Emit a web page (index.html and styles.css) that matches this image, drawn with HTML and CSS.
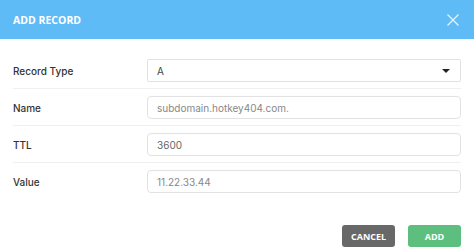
FILE: index.html
```html
<!DOCTYPE html>
<html lang="en">
<head>
    <meta charset="UTF-8">
    <title>Add Record</title>
    <link rel="stylesheet" href="styles.css">
</head>
<body>
    <div class="modal">
        <div class="modal-header">
            <h1>ADD RECORD</h1>
            <button class="close-button" aria-label="Close">
                <svg width="12" height="12" viewBox="0 0 12 12">
                    <path d="M0.5 0.5 L11.5 11.5 M11.5 0.5 L0.5 11.5" stroke="#e6f4fd" stroke-width="1.2" fill="none"/>
                </svg>
            </button>
        </div>

        <form class="modal-body">
            <div class="form-row">
                <label for="recordType">Record Type</label>
                <div class="select-box" id="recordType">
                    <span>A</span>
                    <span class="caret"></span>
                </div>
            </div>

            <div class="form-row">
                <label for="name">Name</label>
                <input type="text" id="name" placeholder="subdomain.hotkey404.com.">
            </div>

            <div class="form-row">
                <label for="ttl">TTL</label>
                <input type="text" id="ttl" value="3600">
            </div>

            <div class="form-row last">
                <label for="value">Value</label>
                <input type="text" id="value" placeholder="11.22.33.44">
            </div>

            <div class="form-actions">
                <button type="button" class="btn btn-cancel">CANCEL</button>
                <button type="submit" class="btn btn-add">ADD</button>
            </div>
        </form>
    </div>
</body>
</html>
```

FILE: styles.css
```css
:root {
    --header-color: #5fbbf6;
    --cancel-color: #686868;
    --add-color: #5cbf7e;
    --line-color: #f0f0f0;
    --input-border: #e2e2e2;
}

body {
    margin: 0;
    padding: 0;
    background: #ffffff;
    font-family: Inter, "Noto Sans", sans-serif;
}

.modal {
    width: 474px;
    height: 249px;
    background: white;
}

.modal-header {
    height: 39px;
    background: var(--header-color);
    display: flex;
    align-items: center;
    justify-content: space-between;
    padding: 0 15px 0 13px;
    box-sizing: border-box;
}

.modal-header h1 {
    margin: 0;
    color: white;
    font-family: "Open Sans", sans-serif;
    font-size: 10.5px;
    font-weight: 700;
}

.close-button {
    background: none;
    border: none;
    padding: 0;
    width: 12px;
    height: 12px;
    display: flex;
    cursor: pointer;
}

.modal-body {
    padding: 13px 13px 0 13px;
}

.form-row {
    display: flex;
    align-items: center;
    padding: 7px 0 6px 0;
    border-bottom: 1px solid var(--line-color);
}

.form-row.last {
    border-bottom: none;
}

.form-row label {
    width: 134px;
    font-size: 10px;
    font-weight: 500;
    color: #333;
}

.form-row input,
.select-box {
    flex: 1;
    height: 23px;
    box-sizing: border-box;
    border: 1px solid var(--input-border);
    border-radius: 4px;
    padding: 0 9px;
    font-family: Inter, "Noto Sans", sans-serif;
    font-size: 10px;
    color: #666;
    outline: none;
}

.form-row input::placeholder {
    color: #888;
}

.select-box {
    display: flex;
    align-items: center;
    justify-content: space-between;
    color: #444;
    border-radius: 2px;
}

.caret {
    width: 0;
    height: 0;
    border-left: 4px solid transparent;
    border-right: 4px solid transparent;
    border-top: 4px solid #222;
    margin-right: 1px;
}

.form-actions {
    display: flex;
    justify-content: flex-end;
    gap: 13px;
    margin-top: 26px;
}

.btn {
    width: 53px;
    height: 22px;
    border: none;
    border-radius: 3px;
    color: white;
    font-family: "Open Sans", sans-serif;
    font-size: 9px;
    font-weight: 700;
    cursor: pointer;
    padding: 0;
}

.btn-cancel {
    background-color: var(--cancel-color);
}

.btn-add {
    background-color: var(--add-color);
}
```
